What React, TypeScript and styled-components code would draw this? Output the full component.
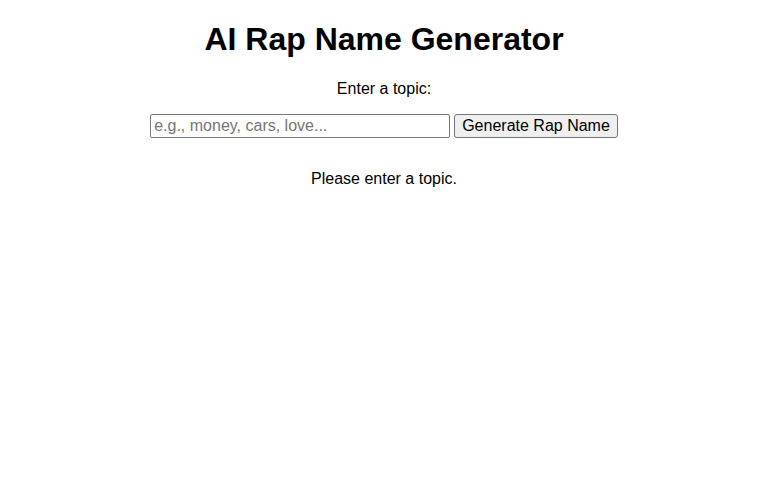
import { useState } from 'react'
import styled, { createGlobalStyle } from 'styled-components'

const GlobalStyle = createGlobalStyle`
  body {
    margin: 0;
    padding: 0 8px;
    font-family: "Liberation Sans", Arial, sans-serif;
    background: #ffffff;
    color: #000000;
  }
`

const Page = styled.div`
  text-align: center;
`

const Title = styled.h1`
  font-size: 32px;
  font-weight: bold;
  margin: 21.44px 0;
`

const Label = styled.p`
  font-size: 16px;
  margin: 16px 0;
`

const Row = styled.div`
  display: flex;
  justify-content: center;
  align-items: center;
  gap: 4px;
`

const Input = styled.input`
  width: 300px;
  box-sizing: border-box;
  font-family: "Liberation Sans", Arial, sans-serif;
  font-size: 16px;
  padding: 1px 3px;
  border: 1px solid #767676;
  border-radius: 2px;
  height: 24px;

  &::placeholder {
    color: #757575;
  }
`

const Button = styled.button`
  box-sizing: border-box;
  font-family: "Liberation Sans", Arial, sans-serif;
  font-size: 16px;
  padding: 1px 7px;
  height: 24px;
  border: 1px solid #767676;
  border-radius: 3px;
  background: #efefef;
  color: #000000;
`

const Result = styled.p`
  font-size: 16px;
  margin: 32px 0 16px;
`

export default function App() {
  const [topic, setTopic] = useState('')
  const [message, setMessage] = useState('Please enter a topic.')

  const onGenerate = () => {
    if (!topic.trim()) {
      setMessage('Please enter a topic.')
      return
    }
    setMessage(`Lil ${topic.trim()}`)
  }

  return (
    <Page>
      <GlobalStyle />
      <Title>AI Rap Name Generator</Title>
      <Label>Enter a topic:</Label>
      <Row>
        <Input
          value={topic}
          placeholder="e.g., money, cars, love..."
          onChange={(e) => setTopic(e.target.value)}
        />
        <Button onClick={onGenerate}>Generate Rap Name</Button>
      </Row>
      <Result>{message}</Result>
    </Page>
  )
}
